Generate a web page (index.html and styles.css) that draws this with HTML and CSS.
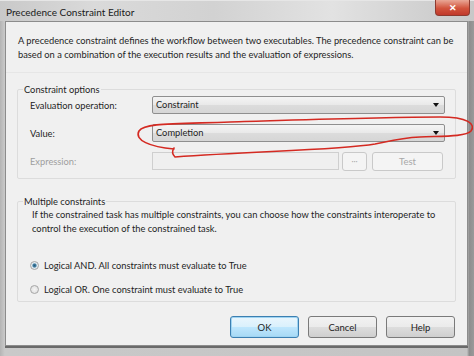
FILE: index.html
```html
<!DOCTYPE html>
<html lang="en">
<head>
    <meta charset="UTF-8">
    <title>Precedence Constraint Editor</title>
    <link rel="stylesheet" href="styles.css">
</head>
<body>
    <div class="window">
        <div class="titlebar">
            <span class="title">Precedence Constraint Editor</span>
            <span class="close">&#x2715;</span>
        </div>

        <div class="client">
            <p class="desc">A precedence constraint defines the workflow between two executables. The precedence constraint can be based on a combination of the execution results and the evaluation of expressions.</p>

            <fieldset class="group options">
                <legend>Constraint options</legend>
                <div class="row">
                    <label>Evaluation operation:</label>
                    <div class="combo">Constraint<span class="arrow"></span></div>
                </div>
                <div class="row">
                    <label>Value:</label>
                    <div class="combo">Completion<span class="arrow"></span></div>
                </div>
                <div class="row">
                    <label class="disabled">Expression:</label>
                    <div class="textbox"></div>
                    <button class="btn small" disabled>&middot;&middot;&middot;</button>
                    <button class="btn test" disabled>Test</button>
                </div>
            </fieldset>

            <fieldset class="group multiple">
                <legend>Multiple constraints</legend>
                <p class="info">If the constrained task has multiple constraints, you can choose how the constraints interoperate to control the execution of the constrained task.</p>
                <div class="radio checked"><span class="dot"></span>Logical AND. All constraints must evaluate to True</div>
                <div class="radio"><span class="dot"></span>Logical OR. One constraint must evaluate to True</div>
            </fieldset>

            <div class="buttons">
                <button class="btn default">OK</button>
                <button class="btn">Cancel</button>
                <button class="btn">Help</button>
            </div>
        </div>

        <!-- hand drawn red mark round the Value row -->
        <svg class="scribble" width="474" height="356" viewBox="0 0 474 356">
            <path d="M174 149 C150 147 134 140 139 131 C144 123 170 124 230 122 C300 120 380 117 440 117 C468 117 476 124 471 131 C466 137 440 136 420 137 C400 138 390 141 375 144 C340 150 260 151 175 157 C172 154 172 151 174 148"
                  fill="none" stroke="#d42a22" stroke-width="1.6" stroke-linecap="round"/>
        </svg>
    </div>
</body>
</html>
```
FILE: styles.css
```css
* {margin: 0; padding: 0; box-sizing: border-box;}
body {background: #7a7a7a; font-family: "Segoe UI", Lato, "Noto Sans", sans-serif; font-size: 9.3px; color: #1e1e1e;}

.window {position: relative; width: 474px; height: 356px; overflow: hidden;
    background: linear-gradient(90deg, #b4b4b4 0, #c9c9c9 1%, #c4c4c4 98.5%, #8d8d8d 99%, #9a9a9a 100%);}

.titlebar {height: 21px; display: flex; align-items: center; justify-content: space-between; padding-left: 6px;
    background: linear-gradient(90deg, #c9c9c9 0%, #dadada 20%, #d2d2d2 45%, #e2e2e2 70%, #d0d0d0 90%, #c8c8c8 100%);
    border-top: 1px solid #e6e6e6;}
.title {color: #1a1a1a; font-size: 10px; padding-top: 1px;}
.close {align-self: flex-start; margin-top: -1px; margin-right: 4px; width: 35px; height: 16px; border-radius: 0 0 4px 4px;
    background: linear-gradient(#e9a796, #d2543d 55%, #c0392b); border: 1px solid #8e3a2f; border-top: 0;
    color: #fff; font-size: 9px; font-weight: bold; text-align: center; line-height: 15px;}

.client {margin: 0 6px 0 5px; height: 325px; background: #f0f0f0; border: 1px solid #8c8c8c;
    padding: 12px 11px 0 11px; box-shadow: 0 2px 0 #6a6a6a;}

.desc {line-height: 14px; padding: 0 2px 10px 12px; border-bottom: 1px solid #e6e6e6; margin: 0 -11px;}

.group {border: 1px solid #dcdcdc; border-radius: 2px; padding: 0 0 0 12px;}
.group legend {margin-left: -7px; padding: 0 1px; color: #1e1e1e;}

.options {margin-top: 11px; height: 95px;}
.row {display: flex; align-items: center; height: 18px;}
.row:first-of-type {margin-top: 1px;}
.row + .row {margin-top: 10px;}
.row label {width: 122px; flex: none;}
.row label.disabled {color: #9e9e9e;}

.combo {position: relative; width: 293px; height: 18px; line-height: 16px; padding-left: 3px;
    border: 1px solid #8f8f8f; border-radius: 2px; background: linear-gradient(#f4f4f4, #e9e9e9 50%, #dcdcdc 51%, #d6d6d6);}
.arrow {position: absolute; right: 5px; top: 6px; border-left: 3px solid transparent; border-right: 3px solid transparent; border-top: 4px solid #111;}

.textbox {width: 187px; height: 18px; border: 1px solid #cfcfcf; background: #efefef;}

.btn {font-family: inherit; font-size: 9.5px; color: #1e1e1e; height: 22px; width: 69px; border: 1px solid #7a7a7a; border-radius: 3px;
    background: linear-gradient(#f2f2f2, #ebebeb 50%, #dddddd 51%, #cfcfcf);}
.btn:disabled {color: #a8a8a8; border-color: #c9c9c9; background: #f4f4f4; height: 19px;}
.btn.small {width: 25px; margin-left: 3px; font-size: 8px;}
.btn.test {width: 71px; margin-left: 5px;}
.btn.default {border-color: #3c7fb1; box-shadow: inset 0 0 0 1px #9fd4f2; background: linear-gradient(#eaf6fd, #d9f0fc 50%, #bee6fd 51%, #a7d9f5);}

.multiple {margin-top: 17px; height: 106px;}
.info {line-height: 14px; padding-left: 2px; margin-top: 1px; width: 425px;}
.radio {display: flex; align-items: center; height: 14px; padding-left: 0;}
.radio:first-of-type {margin-top: 22px;}
.radio + .radio {margin-top: 10px;}
.dot {width: 9px; height: 9px; border-radius: 50%; border: 1px solid #a6a6a6; background: radial-gradient(#f4f4f4, #dcdcdc); margin-right: 5px;}
.radio.checked .dot {background: radial-gradient(#2b5a78 0, #3f7ea3 1.6px, #e6eef3 2.6px, #d8d8d8 100%);}

.buttons {display: flex; justify-content: flex-end; gap: 9px; margin-top: 14px; padding-right: 1px;}

.scribble {position: absolute; left: 0; top: 0; pointer-events: none;}
```
